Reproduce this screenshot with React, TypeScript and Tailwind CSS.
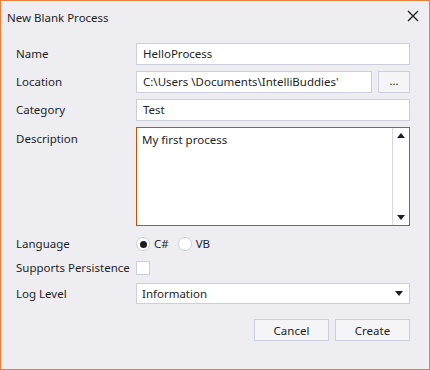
import { useState } from 'react';

const font = { fontFamily: '"Noto Sans", "Open Sans", sans-serif' };

function Row({ label, children, top = false }: { label: string; children: React.ReactNode; top?: boolean }) {
  return (
    <div className={`flex ${top ? 'items-start' : 'items-center'}`}>
      <div className={`w-[120px] shrink-0 text-[11.5px] text-[#1e1e1e] ${top ? 'pt-[3px]' : ''}`}>{label}</div>
      <div className="flex-1 min-w-0">{children}</div>
    </div>
  );
}

export default function App() {
  const [lang, setLang] = useState('cs');
  const [persist, setPersist] = useState(false);

  return (
    <div className="w-[430px] h-[370px] bg-[#eeeef2] border border-[#e8803c] flex flex-col" style={font}>
      {/* Title bar */}
      <div className="flex items-center justify-between h-[33px] pl-[6px] pr-[10px]">
        <span className="text-[11.5px] text-[#1e1e1e]">New Blank Process</span>
        <svg width="12" height="12" viewBox="0 0 12 12" className="mt-[-4px]">
          <path d="M1 1L11 11M11 1L1 11" stroke="#1e1e1e" strokeWidth="1.4" />
        </svg>
      </div>

      {/* Form */}
      <div className="flex flex-col pl-[15px] pr-[19px] pt-[9px]">
        <Row label="Name">
          <div className="h-[22px] bg-white border border-[#cccedb] px-[6px] flex items-center text-[11.5px] text-[#1e1e1e]">
            HelloProcess
          </div>
        </Row>

        <div className="mt-[6px]">
          <Row label="Location">
            <div className="flex gap-[6px]">
              <div className="flex-1 h-[22px] bg-white border border-[#cccedb] px-[6px] flex items-center text-[11.5px] text-[#1e1e1e] overflow-hidden whitespace-nowrap">
                C:\Users \Documents\IntelliBuddies'
              </div>
              <button className="w-[32px] h-[22px] bg-[#f5f5f7] border border-[#cccedb] text-[11px] text-[#1e1e1e] leading-none pb-[4px]">
                ...
              </button>
            </div>
          </Row>
        </div>

        <div className="mt-[6px]">
          <Row label="Category">
            <div className="h-[22px] bg-white border border-[#cccedb] px-[6px] flex items-center text-[11.5px] text-[#1e1e1e]">
              Test
            </div>
          </Row>
        </div>

        <div className="mt-[6px]">
          <Row label="Description" top>
            <div className="h-[99px] bg-white border border-[#ca5100] flex">
              <div className="flex-1 px-[5px] pt-[3px] text-[11.5px] text-[#1e1e1e]">My first process</div>
              <div className="w-[17px] border-l border-[#d6d6de] flex flex-col items-center justify-between py-[5px]">
                <svg width="8" height="5" viewBox="0 0 8 5"><path d="M0 5L4 0L8 5Z" fill="#1e1e1e" /></svg>
                <svg width="8" height="5" viewBox="0 0 8 5"><path d="M0 0L4 5L8 0Z" fill="#1e1e1e" /></svg>
              </div>
            </div>
          </Row>
        </div>

        <div className="mt-[9px]">
          <Row label="Language">
            <div className="flex items-center h-[18px] text-[11.5px] text-[#1e1e1e]">
              <button onClick={() => setLang('cs')} className="flex items-center gap-[4px]">
                <span className="w-[14px] h-[14px] rounded-full bg-white border border-[#cccedb] flex items-center justify-center">
                  {lang === 'cs' && <span className="w-[7px] h-[7px] rounded-full bg-[#1e1e1e]" />}
                </span>
                C#
              </button>
              <button onClick={() => setLang('vb')} className="flex items-center gap-[4px] ml-[9px]">
                <span className="w-[14px] h-[14px] rounded-full bg-white border border-[#cccedb] flex items-center justify-center">
                  {lang === 'vb' && <span className="w-[7px] h-[7px] rounded-full bg-[#1e1e1e]" />}
                </span>
                VB
              </button>
            </div>
          </Row>
        </div>

        <div className="mt-[6px]">
          <Row label="Supports Persistence">
            <button
              onClick={() => setPersist(!persist)}
              className="w-[14px] h-[14px] bg-white border border-[#cccedb] flex items-center justify-center text-[10px]"
            >
              {persist ? '✓' : ''}
            </button>
          </Row>
        </div>

        <div className="mt-[7px]">
          <Row label="Log Level">
            <div className="h-[21px] bg-white border border-[#cccedb] pl-[5px] pr-[6px] flex items-center justify-between text-[11.5px] text-[#1e1e1e]">
              <span>Information</span>
              <svg width="8" height="5" viewBox="0 0 8 5"><path d="M0 0L4 5L8 0Z" fill="#1e1e1e" /></svg>
            </div>
          </Row>
        </div>

        {/* Buttons */}
        <div className="flex justify-end gap-[6px] mt-[15px]">
          <button className="w-[75px] h-[22px] bg-[#f5f5f7] border border-[#cccedb] text-[11.5px] text-[#1e1e1e]">Cancel</button>
          <button className="w-[75px] h-[22px] bg-[#f5f5f7] border border-[#cccedb] text-[11.5px] text-[#1e1e1e]">Create</button>
        </div>
      </div>
    </div>
  );
}
